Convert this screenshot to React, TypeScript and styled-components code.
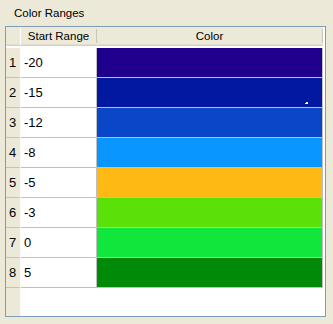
import React from "react";
import styled, { createGlobalStyle } from "styled-components";

const Global = createGlobalStyle`
  html, body { margin: 0; padding: 0; background: #ece9d8; }
  body { font-family: "Liberation Sans", Arial, sans-serif; }
`;

const Page = styled.div`
  width: 333px;
  height: 324px;
  background: #ece9d8;
  display: flex;
  flex-direction: column;
  box-sizing: border-box;
  padding: 0 0 0 5px;
`;

const Title = styled.div`
  height: 26px;
  line-height: 27px;
  padding-left: 9px;
  font-size: 11.5px;
  color: #000;
`;

const Frame = styled.div`
  width: 321px;
  height: 291px;
  box-sizing: border-box;
  border: 1px solid #7f9db9;
  background: #fff;
  display: flex;
  flex-direction: column;
  position: relative;
`;

const Grid = styled.div`
  display: grid;
  grid-template-columns: 15px 75px 1px 225px 1px;
`;

const HeaderCell = styled.div<{ $first?: boolean }>`
  height: 18px;
  background: #ece9d8;
  border-bottom: 1px solid #d6d2c2;
  box-shadow: inset 0 -1px 0 #e2decd;
  margin-bottom: 2px;
  font-size: 11.5px;
  line-height: 19px;
  text-align: center;
  color: #000;
  position: relative;
  border-right: ${(p) => (p.$first ? "1px solid #fff" : "none")};
`;

const HeaderSep = styled.div`
  height: 18px;
  background: #ece9d8;
  border-bottom: 1px solid #d6d2c2;
  margin-bottom: 2px;
  display: flex;
  justify-content: center;
  &::after {
    content: "";
    width: 1px;
    height: 14px;
    margin-top: 2px;
    background: #c8c5b5;
  }
`;

const HeaderGapRow = styled.div`
  grid-column: 1 / -1;
  height: 0;
`;

const RowNum = styled.div`
  height: 29px;
  background: #ece9d8;
  border-right: 1px solid #fbfaf6;
  box-sizing: border-box;
  font-size: 13px;
  line-height: 29px;
  text-align: center;
  color: #000;
  padding-right: 1px;
`;

const RowNumLine = styled.div`
  height: 1px;
  background: #c6c3b3;
  border-right: 1px solid #fbfaf6;
  box-sizing: border-box;
`;

const ValueCell = styled.div`
  height: 29px;
  font-size: 13px;
  line-height: 29px;
  padding-left: 3px;
  color: #000;
  background: #fff;
`;

const VLine = styled.div`
  background: #c0c0c0;
`;

const HLine = styled.div`
  height: 1px;
  background: #c0c0c0;
`;

const ColorCell = styled.div<{ $c: string }>`
  height: 29px;
  background: ${(p) => p.$c};
  position: relative;
`;

const Mark = styled.span`
  position: absolute;
  right: 14px;
  bottom: 3px;
  width: 3px;
  height: 2px;
  background: #fff;
  clip-path: polygon(33% 0, 100% 0, 100% 100%, 0 100%, 0 50%, 33% 50%);
`;

const Filler = styled.div`
  flex: 1;
  display: grid;
  grid-template-columns: 15px 1fr;
`;

const FillerHead = styled.div`
  background: #ece9d8;
  border-right: 1px solid #fbfaf6;
`;

const rows = [
  { v: "-20", c: "#1e008c" },
  { v: "-15", c: "#0019a0" },
  { v: "-12", c: "#0a46c8" },
  { v: "-8", c: "#0a96ff" },
  { v: "-5", c: "#ffb914" },
  { v: "-3", c: "#5ae10a" },
  { v: "0", c: "#10e63c" },
  { v: "5", c: "#008a08" },
];

export default function App() {
  return (
    <Page>
      <Global />
      <Title>Color Ranges</Title>
      <Frame>
        <Grid>
          <HeaderCell $first />
          <HeaderCell>Start Range</HeaderCell>
          <HeaderSep />
          <HeaderCell>Color</HeaderCell>
          <HeaderSep />
          <HeaderGapRow />
          {rows.map((r, i) => (
            <React.Fragment key={i}>
              <RowNum>{i + 1}</RowNum>
              <ValueCell>{r.v}</ValueCell>
              <VLine />
              <ColorCell $c={r.c}>{i === 1 && <Mark />}</ColorCell>
              <VLine />
              <RowNumLine />
              <HLine />
              <HLine />
              <HLine />
              <HLine />
            </React.Fragment>
          ))}
        </Grid>
        <Filler>
          <FillerHead />
          <div />
        </Filler>
      </Frame>
    </Page>
  );
}
